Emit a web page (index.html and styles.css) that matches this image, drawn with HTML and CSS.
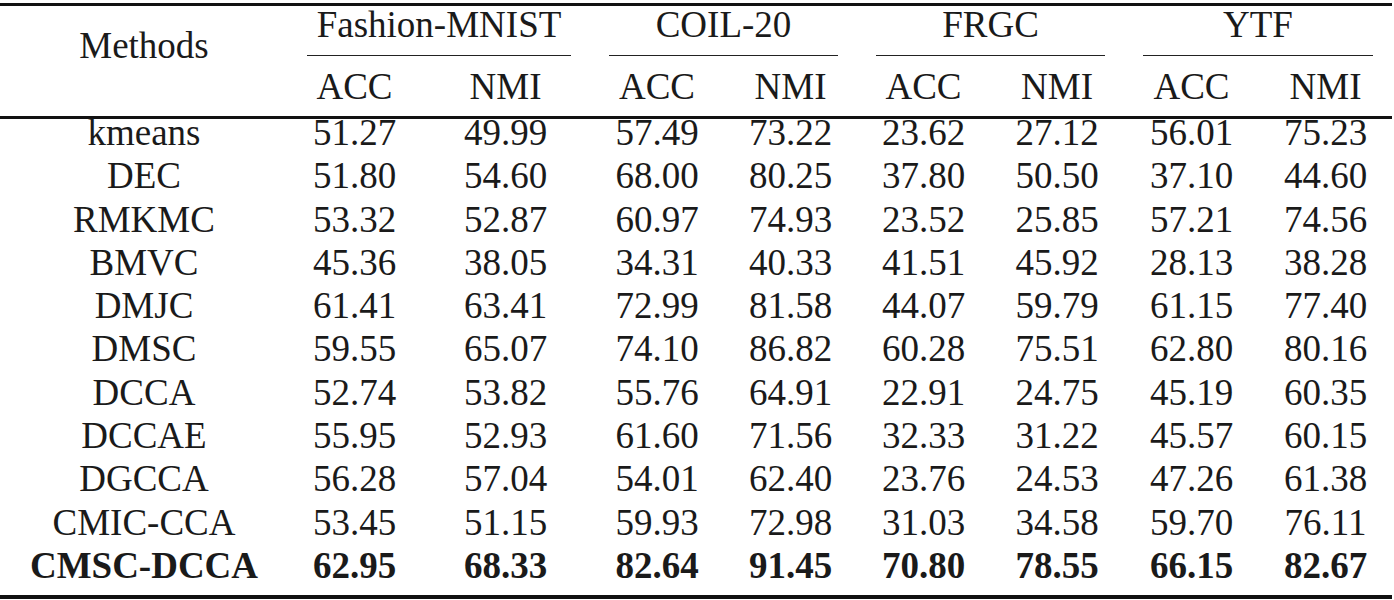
FILE: index.html
```html
<!DOCTYPE html>
<html lang="en">
<head>
  <meta charset="UTF-8" />
  <meta name="viewport" content="width=device-width, initial-scale=1.0" />
  <title>Clustering results</title>
  <link rel="stylesheet" href="styles.css">
</head>
<body>
  <table class="results">
    <colgroup>
      <col class="col-method">
      <col style="width: 133px">
      <col style="width: 169px">
      <col style="width: 134px">
      <col style="width: 133px">
      <col style="width: 133px">
      <col style="width: 134px">
      <col style="width: 135px">
      <col style="width: 133px">
    </colgroup>
    <thead>
      <tr class="head-top">
        <th rowspan="2" class="methods"><span>Methods</span></th>
        <th colspan="2"><div class="group">Fashion-MNIST</div></th>
        <th colspan="2"><div class="group">COIL-20</div></th>
        <th colspan="2"><div class="group">FRGC</div></th>
        <th colspan="2"><div class="group">YTF</div></th>
      </tr>
      <tr class="head-sub">
        <th>ACC</th><th>NMI</th>
        <th>ACC</th><th>NMI</th>
        <th>ACC</th><th>NMI</th>
        <th>ACC</th><th>NMI</th>
      </tr>
    </thead>
    <tbody>
      <tr><td>kmeans</td><td>51.27</td><td>49.99</td><td>57.49</td><td>73.22</td><td>23.62</td><td>27.12</td><td>56.01</td><td>75.23</td></tr>
      <tr><td>DEC</td><td>51.80</td><td>54.60</td><td>68.00</td><td>80.25</td><td>37.80</td><td>50.50</td><td>37.10</td><td>44.60</td></tr>
      <tr><td>RMKMC</td><td>53.32</td><td>52.87</td><td>60.97</td><td>74.93</td><td>23.52</td><td>25.85</td><td>57.21</td><td>74.56</td></tr>
      <tr><td>BMVC</td><td>45.36</td><td>38.05</td><td>34.31</td><td>40.33</td><td>41.51</td><td>45.92</td><td>28.13</td><td>38.28</td></tr>
      <tr><td>DMJC</td><td>61.41</td><td>63.41</td><td>72.99</td><td>81.58</td><td>44.07</td><td>59.79</td><td>61.15</td><td>77.40</td></tr>
      <tr><td>DMSC</td><td>59.55</td><td>65.07</td><td>74.10</td><td>86.82</td><td>60.28</td><td>75.51</td><td>62.80</td><td>80.16</td></tr>
      <tr><td>DCCA</td><td>52.74</td><td>53.82</td><td>55.76</td><td>64.91</td><td>22.91</td><td>24.75</td><td>45.19</td><td>60.35</td></tr>
      <tr><td>DCCAE</td><td>55.95</td><td>52.93</td><td>61.60</td><td>71.56</td><td>32.33</td><td>31.22</td><td>45.57</td><td>60.15</td></tr>
      <tr><td>DGCCA</td><td>56.28</td><td>57.04</td><td>54.01</td><td>62.40</td><td>23.76</td><td>24.53</td><td>47.26</td><td>61.38</td></tr>
      <tr><td>CMIC-CCA</td><td>53.45</td><td>51.15</td><td>59.93</td><td>72.98</td><td>31.03</td><td>34.58</td><td>59.70</td><td>76.11</td></tr>
      <tr class="best"><td>CMSC-DCCA</td><td>62.95</td><td>68.33</td><td>82.64</td><td>91.45</td><td>70.80</td><td>78.55</td><td>66.15</td><td>82.67</td></tr>
    </tbody>
  </table>
</body>
</html>
```

FILE: styles.css
```css
body {
  margin: 0;
  background-color: #fff;
}

.results {
  width: 1392px;
  margin-top: 3px;
  border-collapse: collapse;
  table-layout: fixed;
  border-top: 3px solid #111;
  border-bottom: 4px solid #111;
  font-family: "Liberation Serif", "Times New Roman", serif;
  font-size: 37px;
  color: #1a1a1a;
}

.col-method {
  width: 288px;
}

.results th,
.results td {
  padding: 0;
  text-align: center;
  font-weight: normal;
}

.methods {
  vertical-align: top;
}

.methods span {
  display: block;
  padding-top: 21px;
  line-height: 37px;
}

/* cmidrule under each dataset name */
.results .head-top th[colspan] {
  padding: 0 19px;
}

.group {
  line-height: 34px;
  padding-top: 2px;
  padding-bottom: 13px;
  border-bottom: 1.5px solid #222;
}

.results .head-sub th {
  line-height: 59px;
  padding-top: 1px;
}

thead {
  border-bottom: 3px solid #111;
}

.results tbody td {
  line-height: 27.3px;
  padding-bottom: 16px;
}

.results .best td {
  font-weight: bold;
}
```
